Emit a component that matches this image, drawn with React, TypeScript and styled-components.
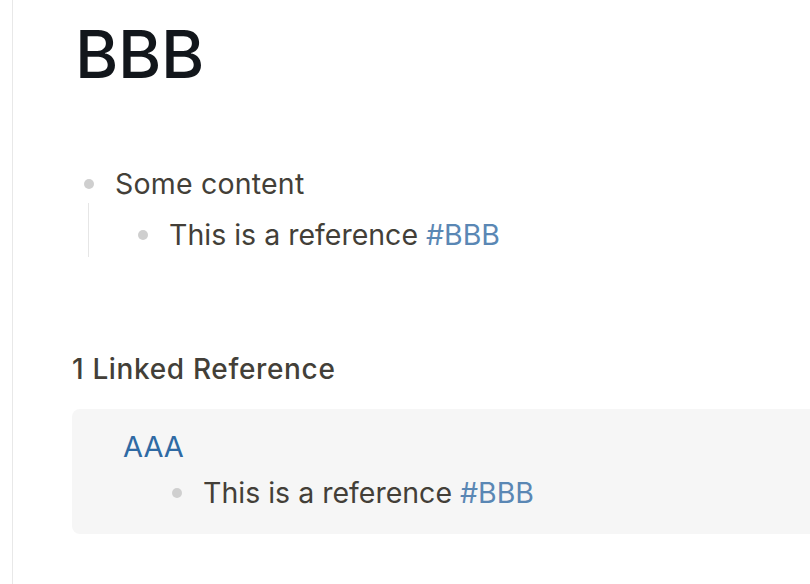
import React from 'react';
import styled, { createGlobalStyle } from 'styled-components';

const GlobalStyle = createGlobalStyle`
  html, body {
    margin: 0;
    padding: 0;
    background: #ffffff;
  }
  body {
    font-family: Inter, "Noto Sans", sans-serif;
    color: #433f38;
    -webkit-font-smoothing: antialiased;
  }
`;

const App = () => {
  return (
    <>
      <GlobalStyle />
      <Layout>
        <Divider />
        <Main>
          <Title>BBB</Title>
          <Blocks>
            <Block>
              <BulletWrap>
                <Bullet />
              </BulletWrap>
              <BlockText $spacing="0.2px">Some content</BlockText>
            </Block>
            <Children>
              <Block>
                <BulletWrap>
                  <Bullet />
                </BulletWrap>
                <BlockText>
                  This is a reference <Tag>#BBB</Tag>
                </BlockText>
              </Block>
            </Children>
          </Blocks>

          <RefHeader>1 Linked Reference</RefHeader>
          <RefCard>
            <PageLink>AAA</PageLink>
            <RefBlocks>
              <Block>
                <BulletWrap>
                  <Bullet />
                </BulletWrap>
                <BlockText>
                  This is a reference <Tag>#BBB</Tag>
                </BlockText>
              </Block>
            </RefBlocks>
          </RefCard>
        </Main>
      </Layout>
    </>
  );
};

export default App;

const Layout = styled.div`
  display: flex;
  min-height: 584px;
  width: 810px;
  overflow: hidden;
`;

const Divider = styled.div`
  width: 12px;
  flex-shrink: 0;
  border-right: 1px solid #e8e8e8;
`;

const Main = styled.div`
  flex: 1;
  padding: 14px 0 0 59px;
`;

const Title = styled.h1`
  margin: 0 0 0 3px;
  font-size: 66px;
  line-height: 80px;
  font-weight: 500;
  color: #12161b;
  letter-spacing: -0.4px;
`;

const Blocks = styled.div`
  margin-top: 64px;
`;

const Block = styled.div`
  display: flex;
  align-items: center;
  height: 51px;
`;

const BulletWrap = styled.div`
  width: 34px;
  display: flex;
  justify-content: center;
  align-items: center;
  margin-right: 9px;
  flex-shrink: 0;
`;

const Bullet = styled.span`
  width: 10px;
  height: 10px;
  border-radius: 50%;
  background: #cfcfcf;
`;

const BlockText = styled.div<{ $spacing?: string }>`
  font-size: 28.5px;
  line-height: 40px;
  color: #433f38;
  white-space: nowrap;
  letter-spacing: ${(p) => p.$spacing || '0'};
`;

const Tag = styled.span`
  color: #5a87b4;
`;

const Children = styled.div`
  margin: -6px 0 0 16px;
  padding: 6px 0 0 37px;
  height: 48px;
  border-left: 1px solid #e6e6e6;
`;

const RefHeader = styled.div`
  margin-top: 92px;
  font-size: 28px;
  font-weight: 500;
  line-height: 40px;
  letter-spacing: 0.65px;
  color: #433f38;
`;

const RefCard = styled.div`
  margin-top: 20px;
  background: #f6f6f6;
  border-radius: 8px 0 0 8px;
  padding: 18px 0 16px 51px;
`;

const PageLink = styled.div`
  font-size: 29px;
  line-height: 40px;
  color: #2f6aa4;
`;

const RefBlocks = styled.div`
  margin-left: 37px;
`;
